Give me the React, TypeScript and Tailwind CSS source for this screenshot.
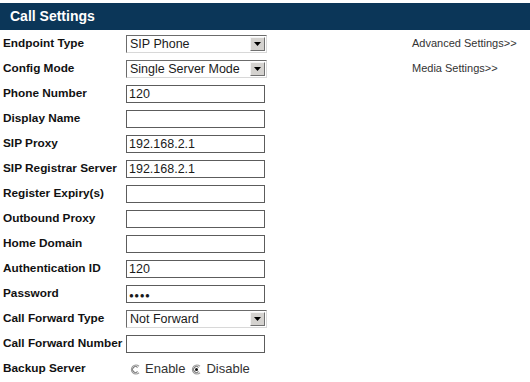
import React from 'react';

type Row = {
  label: string;
  kind: 'select' | 'input' | 'password' | 'radio';
  value?: string;
  link?: string;
};

const rows: Row[] = [
  { label: 'Endpoint Type', kind: 'select', value: 'SIP Phone', link: 'Advanced Settings>>' },
  { label: 'Config Mode', kind: 'select', value: 'Single Server Mode', link: 'Media Settings>>' },
  { label: 'Phone Number', kind: 'input', value: '120' },
  { label: 'Display Name', kind: 'input', value: '' },
  { label: 'SIP Proxy', kind: 'input', value: '192.168.2.1' },
  { label: 'SIP Registrar Server', kind: 'input', value: '192.168.2.1' },
  { label: 'Register Expiry(s)', kind: 'input', value: '' },
  { label: 'Outbound Proxy', kind: 'input', value: '' },
  { label: 'Home Domain', kind: 'input', value: '' },
  { label: 'Authentication ID', kind: 'input', value: '120' },
  { label: 'Password', kind: 'password', value: '●●●●' },
  { label: 'Call Forward Type', kind: 'select', value: 'Not Forward' },
  { label: 'Call Forward Number', kind: 'input', value: '' },
  { label: 'Backup Server', kind: 'radio' },
];

function SelectBox({ value }: { value?: string }) {
  return (
    <div className="flex h-[18px] w-[141px] items-stretch border border-t-[#6b6b6b] border-l-[#6b6b6b] border-b-[#d8d8d8] border-r-[#d8d8d8] bg-white">
      <div className="flex-1 pl-[3px] text-[12.5px] leading-[16px] text-[#1a1a1a]">{value}</div>
      <div className="m-[1px] flex w-[15px] items-center justify-center border border-t-[#f4f4f4] border-l-[#f4f4f4] border-b-[#707070] border-r-[#707070] bg-[#d4d2cf]">
        <svg width="7" height="4" viewBox="0 0 7 4">
          <path d="M0 0h7L3.5 4z" fill="#000" />
        </svg>
      </div>
    </div>
  );
}

function TextBox({ value, password }: { value?: string; password?: boolean }) {
  return (
    <div className="h-[18px] w-[139px] border border-[#5c5c5c] bg-white pl-[2px] text-[12.5px] leading-[16px] text-[#1a1a1a]">
      {password ? <span className="text-[8px] tracking-[0.5px]">{value}</span> : value}
    </div>
  );
}

function Radio({ checked }: { checked?: boolean }) {
  return (
    <svg width="11" height="11" viewBox="0 0 11 11" className="mr-[4px]">
      <path d="M9 2.2A4.5 4.5 0 1 0 9 8.8" fill="none" stroke="#9a9a9a" strokeWidth="1.2" />
      <path d="M7.6 3.3A3 3 0 1 0 7.6 7.7" fill="none" stroke="#444" strokeWidth="0.9" />
      {checked && <circle cx="5.5" cy="5.5" r="1.5" fill="#111" />}
    </svg>
  );
}

export default function App() {
  return (
    <div className="h-[382px] w-[530px] bg-white pt-[3px]" style={{ fontFamily: '"Liberation Sans", Arial, sans-serif' }}>
      <div className="flex h-[27px] items-center bg-[#0b3658] pl-[10px] text-[14px] font-bold text-white">
        Call Settings
      </div>
      <div className="pt-[1px]">
        {rows.map((r) => (
          <div key={r.label} className="flex h-[25px] items-center">
            <div className="w-[126px] shrink-0 whitespace-nowrap pl-[3px] pt-[1px] text-[11.8px] font-bold text-[#111]">{r.label}</div>
            <div className="w-[286px] shrink-0">
              {r.kind === 'select' && <SelectBox value={r.value} />}
              {r.kind === 'input' && <TextBox value={r.value} />}
              {r.kind === 'password' && <TextBox value={r.value} password />}
              {r.kind === 'radio' && (
                <div className="flex items-center pl-[4px] pt-[1px] text-[13px] text-[#333]">
                  <Radio />
                  <span className="mr-[6px]">Enable</span>
                  <Radio checked />
                  <span>Disable</span>
                </div>
              )}
            </div>
            {r.link && <div className="whitespace-nowrap text-[11px] text-[#333]">{r.link}</div>}
          </div>
        ))}
      </div>
    </div>
  );
}
